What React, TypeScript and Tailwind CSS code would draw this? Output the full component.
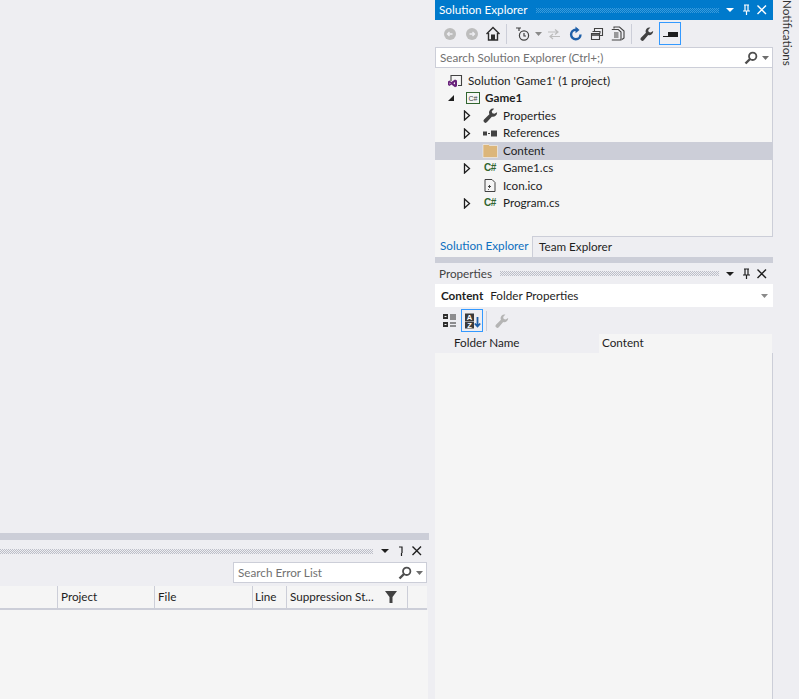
import React from "react";

function Dots({ light }: { light?: boolean }) {
  return (
    <svg className="flex-1 h-[5px] min-w-0" preserveAspectRatio="none">
      <defs>
        <pattern id={light ? "dl" : "dd"} width="2" height="2" patternUnits="userSpaceOnUse">
          <rect width="1" height="1" fill={light ? "#3a9bdc" : "#bcbec8"} />
          <rect x="1" y="1" width="1" height="1" fill={light ? "#3a9bdc" : "#bcbec8"} />
        </pattern>
      </defs>
      <rect width="100%" height="100%" fill={`url(#${light ? "dl" : "dd"})`} />
    </svg>
  );
}

function WinBtns({ color, hidePin }: { color: string; hidePin?: boolean }) {
  return (
    <div className="flex items-center" style={{ color }}>
      <svg width="16" height="14" viewBox="0 0 16 14"><path d="M4 5h8l-4 4z" fill="currentColor" /></svg>
      <svg width="16" height="14" viewBox="0 0 16 14">
        {hidePin ? (
          <path d="M6 3h3v6M8.5 9v3" stroke="currentColor" strokeWidth="1.2" fill="none" />
        ) : (
          <path d="M6 2h5M7 2v6M10 2v6M5 8h7M8.5 8v4" stroke="currentColor" strokeWidth="1.2" fill="none" />
        )}
      </svg>
      <svg width="16" height="14" viewBox="0 0 16 14"><path d="M3.5 2.5l8.5 8.5M12 2.5l-8.5 8.5" stroke="currentColor" strokeWidth="1.4" fill="none" /></svg>
    </div>
  );
}

function Wrench({ color = "#424242", size = 16 }: { color?: string; size?: number }) {
  return (
    <svg width={size} height={size} viewBox="0 0 16 16">
      <path d="M15 4.6a4.4 4.4 0 0 1-5.6 4.6L4.3 15a2 2 0 0 1-3.2-2.7l5.7-5.6A4.4 4.4 0 0 1 11.9.7L9.3 3.4l.7 2.2 2.2.6z" fill={color} />
    </svg>
  );
}

function Magnifier() {
  return (
    <svg width="16" height="16" viewBox="0 0 16 16">
      <circle cx="9.7" cy="6.3" r="3.7" fill="none" stroke="#4f4f4f" strokeWidth="1.8" />
      <path d="M7 9l-4.5 4.5" stroke="#4f4f4f" strokeWidth="2.4" />
    </svg>
  );
}

function Caret({ color = "#6d6d6d" }: { color?: string }) {
  return <svg width="7" height="4" viewBox="0 0 7 4"><path d="M0 0h7L3.5 4z" fill={color} /></svg>;
}

function Sep() {
  return <div className="w-px h-[20px] bg-[#ccced8] mx-[3px]" />;
}

function Expander() {
  return (
    <svg width="8" height="11" viewBox="0 0 8 11"><path d="M1.5 1l5 4.5-5 4.5z" fill="none" stroke="#1e1e1e" strokeWidth="1.3" /></svg>
  );
}

function CsIcon() {
  return <span className="w-[16px] text-center text-[10px] leading-none font-bold text-[#31652f] font-['Liberation_Sans',sans-serif] tracking-[-0.3px]">C#</span>;
}

function Row({ exp, icon, label, sel }: { exp?: boolean; icon: React.ReactNode; label: string; sel?: boolean }) {
  return (
    <div className={`h-[17.5px] flex items-center pl-[28px] ${sel ? "bg-[#ccced8]" : ""}`}>
      <div className="w-[19px] flex items-center">{exp && <Expander />}</div>
      <div className="w-[16px] h-[16px] flex items-center justify-center mr-[5px]">{icon}</div>
      <span>{label}</span>
    </div>
  );
}

export default function App() {
  return (
    <div className="w-[799px] h-[699px] overflow-hidden flex bg-[#eeeef2] text-[#1e1e1e] text-[11.7px] leading-none font-['Lato','Open_Sans',sans-serif]">
      {/* Left area */}
      <div className="w-[429px] flex flex-col justify-end">
        <div className="h-[166px] flex flex-col">
          <div className="h-[7px] bg-[#ccced8]" />
          <div className="h-[22px] flex items-center pr-[4px] gap-[4px]">
            <Dots />
            <WinBtns color="#1e1e1e" hidePin />
          </div>
          <div className="h-[21px] flex justify-end pr-[2px]">
            <div className="w-[194px] h-[21px] bg-white border border-[#ccced8] flex items-center pl-[4px] text-[#717171]">
              <span className="flex-1">Search Error List</span>
              <Magnifier />
              <span className="ml-[3px] mr-[3px]"><Caret /></span>
            </div>
          </div>
          <div className="h-[3px]" />
          <div className="h-[24px] bg-[#f5f5f5] border-b-2 border-[#ccced8] flex items-stretch mr-[2px]">
            <div className="flex-1 border-r border-[#ccced8]" />
            <div className="w-[97px] border-r border-[#ccced8] pl-[3px] flex items-center">Project</div>
            <div className="w-[98px] border-r border-[#ccced8] pl-[3px] flex items-center">File</div>
            <div className="w-[34px] border-r border-[#ccced8] pl-[2px] flex items-center">Line</div>
            <div className="w-[121px] border-r border-[#ccced8] pl-[3px] pr-[10px] flex items-center justify-between">
              <span>Suppression St...</span>
              <svg width="12" height="12" viewBox="0 0 12 12"><path d="M0 0h12L7.5 6v6h-3V6z" fill="#424242" /></svg>
            </div>
            <div className="w-[19px]" />
          </div>
          <div className="flex-1 bg-[#f5f5f5] mr-[1px]" />
        </div>
      </div>

      {/* Right column */}
      <div className="ml-[6px] w-[338px] flex flex-col">
        <div className="h-[20px] bg-[#007acc] text-white flex items-center pl-[4px] pr-[3px]">
          <span className="mr-[8px]">Solution Explorer</span>
          <Dots light />
          <span className="ml-[3px]"><WinBtns color="#ffffff" /></span>
        </div>
        <div className="h-[27px] flex items-center pl-[5px]">
          <div className="w-[20px] flex justify-center"><svg width="14" height="14" viewBox="0 0 14 14"><circle cx="7" cy="7" r="6" fill="#bdbdbd" /><path d="M9.5 7h-5M6.5 5l-2 2 2 2" stroke="#eeeef2" strokeWidth="1.3" fill="none" /></svg></div>
          <div className="w-[20px] flex justify-center ml-[2px]"><svg width="14" height="14" viewBox="0 0 14 14"><circle cx="7" cy="7" r="6" fill="#bdbdbd" /><path d="M4.5 7h5M7.5 5l2 2-2 2" stroke="#eeeef2" strokeWidth="1.3" fill="none" /></svg></div>
          <div className="w-[20px] flex justify-center ml-[1px]"><svg width="16" height="15" viewBox="0 0 16 15"><path d="M1.5 8L8 1.5 14.5 8M3.5 7v7h9V7" fill="none" stroke="#2d2d2d" strokeWidth="1.4" /><rect x="6" y="8.5" width="4" height="5.5" fill="#2d2d2d" /></svg></div>
          <Sep />
          <div className="w-[20px] flex justify-center ml-[3px]"><svg width="16" height="16" viewBox="0 0 16 16"><circle cx="9" cy="9.5" r="4.6" fill="none" stroke="#424242" strokeWidth="1.2" /><path d="M9 7v3h2M1 2h5M4 2v3" stroke="#424242" strokeWidth="1.2" fill="none" /></svg></div>
          <span className="ml-[2px]"><Caret color="#8a8a8a" /></span>
          <div className="w-[20px] flex justify-center ml-[2px]"><svg width="14" height="12" viewBox="0 0 14 12"><path d="M1 4h10M8 1.5L11 4 8 6.5M13 8.5H3M6 6L3 8.5 6 11" fill="none" stroke="#bdbdbd" strokeWidth="1.2" /></svg></div>
          <div className="w-[20px] flex justify-center ml-[2px]"><svg width="14" height="15" viewBox="0 0 14 15"><path d="M11.5 8.5a4.7 4.7 0 1 1-4.7-4.7H9" fill="none" stroke="#1e5fa8" strokeWidth="2.4" /><path d="M6.5 0.5l4 3.4-4 3.4z" fill="#1e5fa8" /></svg></div>
          <div className="w-[20px] flex justify-center ml-[1px]"><svg width="14" height="14" viewBox="0 0 14 14"><path d="M4.5 4V1.5h8v7H10M2.5 4.5H10v2M1.5 6.5h8v6h-8z" fill="none" stroke="#424242" strokeWidth="1.1" /><path d="M1.5 8h8" stroke="#424242" strokeWidth="1.6" /></svg></div>
          <div className="w-[20px] flex justify-center ml-[1px]"><svg width="14" height="15" viewBox="0 0 14 15"><path d="M3 2.5V1h5.5L13 5v7l-2 1.5M.8 3.5h6.5L10 6v8H.8" fill="none" stroke="#424242" strokeWidth="1.1" /><path d="M3 7h4.5M3 9h4.5M3 11h4.5" stroke="#424242" strokeWidth="1" /></svg></div>
          <Sep />
          <div className="w-[20px] flex justify-center ml-[2px]"><Wrench size={14} /></div>
          <div className="ml-[2px] w-[22px] h-[23px] border border-[#3399ff] flex items-center justify-center"><svg width="15" height="6" viewBox="0 0 15 6"><path d="M0 5.5h15" stroke="#1e1e1e" strokeWidth="1" /><rect x="5" y="1" width="10" height="4" fill="#1e1e1e" /></svg></div>
        </div>
        <div className="h-[21px] bg-white border border-[#ccced8] flex items-center pl-[4px] text-[#717171]">
          <span className="flex-1">Search Solution Explorer (Ctrl+;)</span>
          <Magnifier />
          <span className="ml-[3px] mr-[3px]"><Caret /></span>
        </div>
        <div className="h-[168px] bg-[#f5f5f5] border-r border-[#ccced8] pt-[4px]">
          <div className="h-[17.5px] flex items-center pl-[12px]">
            <svg className="mr-[5px]" width="16" height="15" viewBox="0 0 16 15"><path d="M4 8V2.5h10.5v10H11" fill="none" stroke="#424242" strokeWidth="1.1" /><path d="M1 8.5l1.5-1 1.8 1.6L8 6.5l2 1v5.8l-2 1-3.6-2.7L2.5 13 1 12z" fill="#68217a" /><path d="M2.6 9.4v2l1-1zM8 9l-1.6 1.3L8 11.6z" fill="#f5f5f5" /></svg>
            <span>Solution 'Game1' (1 project)</span>
          </div>
          <div className="h-[17.5px] flex items-center pl-[12px]">
            <svg width="8" height="8" viewBox="0 0 8 8"><path d="M7 1v6H1z" fill="#1e1e1e" /></svg>
            <div className="w-[14px] h-[12px] ml-[11px] mr-[5px] border border-[#31652f] bg-[#f5f5f5] flex items-center justify-center text-[7px] font-['Liberation_Sans',sans-serif] text-[#424242]">C#</div>
            <span className="font-bold">Game1</span>
          </div>
          <Row exp icon={<Wrench size={15} />} label="Properties" />
          <Row exp icon={<svg width="14" height="8" viewBox="0 0 14 8"><rect x="0" y="2.5" width="4" height="4" fill="#424242" /><rect x="5" y="4" width="2" height="1" fill="#424242" /><rect x="8" y="1.5" width="6" height="6" fill="#424242" /></svg>} label="References" />
          <Row sel icon={<svg width="16" height="14" viewBox="0 0 16 14"><path d="M1 .5h5.5l1 1H15.5v12H1z" fill="#dcb67a" stroke="#f5f5f5" strokeWidth="0.6" /></svg>} label="Content" />
          <Row exp icon={<CsIcon />} label="Game1.cs" />
          <Row icon={<svg width="12" height="13" viewBox="0 0 12 13"><path d="M1 .5h7l3 3v9H1z" fill="none" stroke="#424242" /><path d="M4 7.5h3M5.5 6v3M4 10.5h.8" stroke="#424242" strokeWidth="1" /></svg>} label="Icon.ico" />
          <Row exp icon={<CsIcon />} label="Program.cs" />
        </div>
        <div className="h-[21px] flex items-stretch">
          <div className="w-[97px] bg-[#f5f5f5] pl-[5px] pt-[4px] text-[#0e70c0] whitespace-nowrap">Solution Explorer</div>
          <div className="flex-1 pl-[6px] pt-[4px] border-l border-t border-[#ccced8] whitespace-nowrap">Team Explorer</div>
        </div>
        <div className="h-[6px] bg-[#ccced8]" />
        <div className="h-[21px] flex items-center pl-[4px] pr-[3px] text-[#444444]">
          <span className="mr-[8px]">Properties</span>
          <Dots />
          <span className="ml-[3px]"><WinBtns color="#1e1e1e" /></span>
        </div>
        <div className="h-[23px] bg-white flex items-center pl-[6px] pr-[5px]">
          <span className="font-bold mr-[7px]">Content</span>
          <span className="flex-1">Folder Properties</span>
          <Caret color="#8a8a8a" />
        </div>
        <div className="h-[27px] flex items-center pl-[3px]">
          <div className="w-[22px] flex justify-center"><svg width="15" height="15" viewBox="0 0 15 15"><rect x="1" y="1" width="5" height="5" fill="#2d2d2d" /><rect x="1" y="9" width="5" height="5" fill="#2d2d2d" /><path d="M2.5 3.5h2M2.5 11.5h2" stroke="#f0f0f0" /><path d="M8 2h6M8 4h6M8 6h6M8 10h6M8 13h6" stroke="#2d2d2d" strokeWidth="1" /></svg></div>
          <div className="ml-[1px] w-[22px] h-[23px] border border-[#3399ff] flex items-center justify-center"><svg width="17" height="16" viewBox="0 0 17 16"><rect x="1" y="0.5" width="9" height="7.5" fill="#3a3a3a" /><rect x="1" y="8.5" width="9" height="7" fill="#3a3a3a" /><text x="5.5" y="7" textAnchor="middle" fontSize="7.5" fontWeight="700" fontFamily="Liberation Sans" fill="#ffffff">A</text><text x="5.5" y="14.5" textAnchor="middle" fontSize="7.5" fontWeight="700" fontFamily="Liberation Sans" fill="#ffffff">Z</text><path d="M13.5 4v9M10.8 10.5l2.7 3 2.7-3" fill="none" stroke="#1e5fa8" strokeWidth="1.8" /></svg></div>
          <Sep />
          <div className="ml-[5px] w-[14px] flex justify-center"><Wrench color="#b4b4b4" size={14} /></div>
        </div>
        <div className="h-[19px] flex shrink-0">
          <div className="w-[164px] pl-[19px] pb-[1px] flex items-center bg-[#eeeef2]">Folder Name</div>
          <div className="flex-1 pl-[3px] pb-[1px] flex items-center bg-[#f5f5f5] mr-[1px]">Content</div>
        </div>
        <div className="flex-1 bg-[#f5f5f5] border-r border-[#ccced8]" />
      </div>

      {/* Notifications */}
      <div className="flex-1 relative">
        <span className="absolute left-[8px] top-0 [writing-mode:vertical-rl] text-[#333333]">Notifications</span>
      </div>
    </div>
  );
}
